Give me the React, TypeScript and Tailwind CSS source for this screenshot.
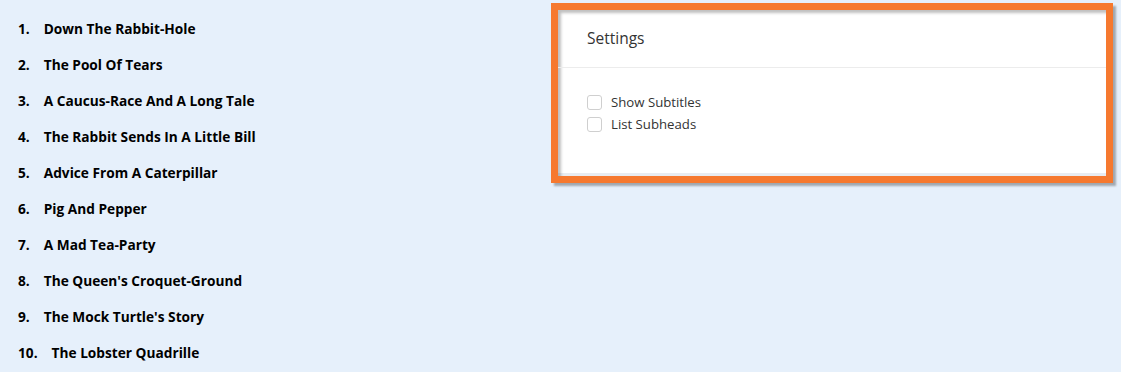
const chapters = [
  "Down The Rabbit-Hole",
  "The Pool Of Tears",
  "A Caucus-Race And A Long Tale",
  "The Rabbit Sends In A Little Bill",
  "Advice From A Caterpillar",
  "Pig And Pepper",
  "A Mad Tea-Party",
  "The Queen's Croquet-Ground",
  "The Mock Turtle's Story",
  "The Lobster Quadrille",
];

const options = ["Show Subtitles", "List Subheads"];

export default function App() {
  return (
    <div className="flex min-h-[372px] bg-[#e6f0fb] font-['Open_Sans','Noto_Sans',sans-serif]">
      {/* chapter list */}
      <ol className="w-[551px] shrink-0 pl-[18px] pt-[19px]">
        {chapters.map((title, i) => (
          <li
            key={title}
            className="flex h-[36px] items-start text-[13.7px] leading-[20px] font-bold text-black"
          >
            <span>{i + 1}.</span>
            <span className="ml-[14px]">{title}</span>
          </li>
        ))}
      </ol>

      {/* settings card with highlight */}
      <div className="mt-[3px] h-[180px] w-[562px] shrink-0 border-[7px] border-[#f6792f] shadow-[3px_3px_2px_rgba(0,0,0,0.3)]">
        <div className="h-full bg-white shadow-[inset_3px_3px_3px_rgba(0,0,0,0.25),inset_0_-3px_0_#e8ecf1]">
          <div className="border-b border-[#ececec] px-[29px] pt-[18px] pb-[19px]">
            <h2 className="text-[15.5px] leading-[20px] text-[#333]">Settings</h2>
          </div>
          <div className="flex flex-col gap-[7px] px-[29px] pt-[27px]">
            {options.map((label) => (
              <label key={label} className="flex items-center gap-[9px] text-[13.2px] leading-[15px] text-[#333]">
                <span className="h-[15px] w-[15px] rounded-[3px] border border-[#cfcfcf] bg-white" />
                {label}
              </label>
            ))}
          </div>
        </div>
      </div>
    </div>
  );
}
